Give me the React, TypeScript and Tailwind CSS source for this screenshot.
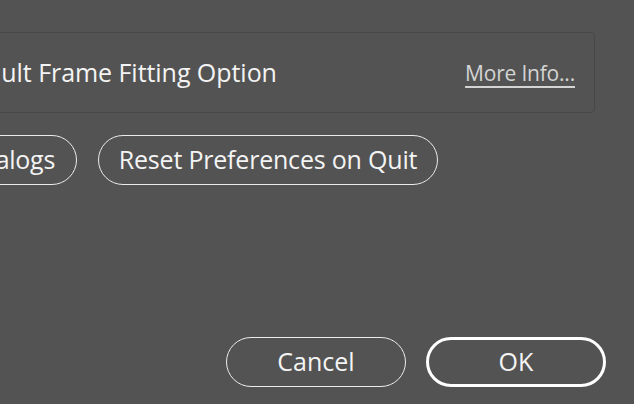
export default function App() {
  return (
    <div className="w-[634px] h-[404px] bg-[#535353] overflow-hidden flex flex-col font-['Open_Sans',sans-serif] font-medium text-[#f4f4f4]">
      <div className="ml-[-74px] mr-[39px] pt-[32px] flex flex-col">
        {/* Frame fitting panel */}
        <div className="h-[81px] border border-[#484848] rounded-[4px] flex items-center justify-between pl-[20px] pr-[19px]">
          <span className="text-[25px] tracking-[-0.05px]">Default Frame Fitting Option</span>
          <a className="text-[21px] text-[#d4d4d4] underline underline-offset-[5px] decoration-[1.5px] tracking-[-0.2px] pt-[2px]">
            More Info...
          </a>
        </div>
      </div>

      {/* Reset buttons */}
      <div className="flex justify-end gap-[21px] mt-[22px] mr-[196px]">
        <button className="shrink-0 h-[50px] border-[1.5px] border-[#ececec] rounded-full pl-[20px] pr-[21px] text-[25px] tracking-[-0.3px] whitespace-nowrap">
          Reset All Warning Dialogs
        </button>
        <button className="shrink-0 w-[340px] h-[50px] border-[1.5px] border-[#ececec] rounded-full text-[25px] tracking-[-0.2px] whitespace-nowrap">
          Reset Preferences on Quit
        </button>
      </div>

      {/* Dialog actions */}
      <div className="mt-auto flex justify-end gap-[20px] pr-[28px] pb-[17px]">
        <button className="w-[180px] h-[50px] border-[1.5px] border-[#ececec] rounded-full text-[25px]">
          Cancel
        </button>
        <button className="w-[180px] h-[50px] border-[3px] border-white rounded-full text-[25px]">
          OK
        </button>
      </div>
    </div>
  );
}
